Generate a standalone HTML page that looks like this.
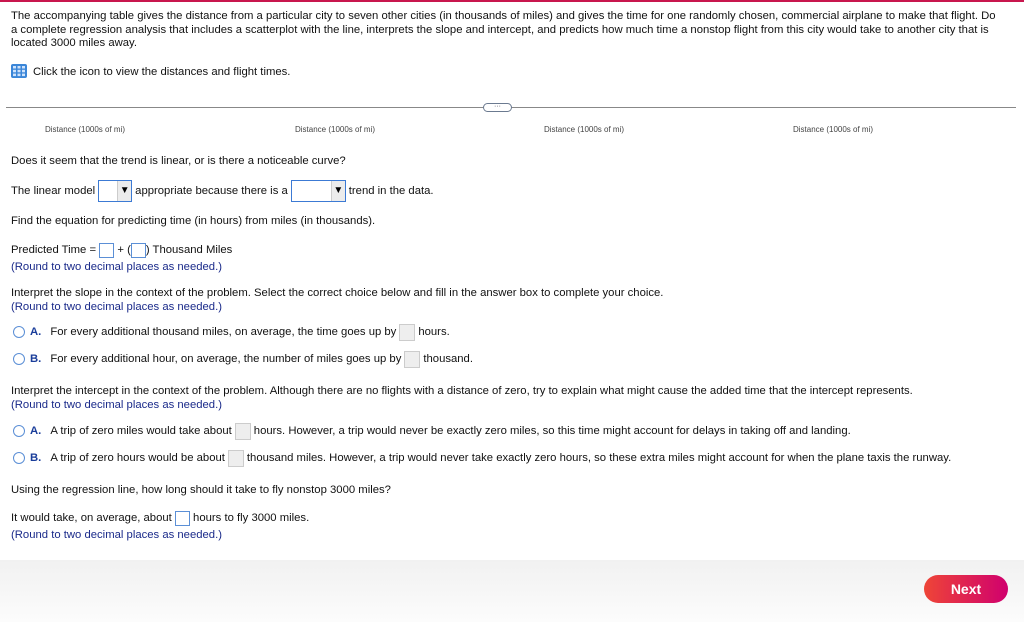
<!DOCTYPE html>
<html><head><style>
*{margin:0;padding:0;box-sizing:border-box}
body{width:1024px;height:622px;overflow:hidden;background:#fff;font-family:"Liberation Sans",Arial,sans-serif;font-size:11.3px;color:#111;position:relative}
.t{position:absolute;left:11px;white-space:nowrap;line-height:14px}
.blue{color:#1a2a8a}
.box{display:inline-block;width:15px;height:15px;border:1px solid #5b8fd6;vertical-align:middle;background:#fff;margin:-4px 0}
.gbox{display:inline-block;width:16px;height:17px;border:1px solid #ccc;background:#eee;vertical-align:middle;margin:-5px 3px}
.sel{display:inline-block;height:22px;border:1px solid #3c7ad4;vertical-align:middle;position:relative;background:#fff;margin:-8px 3px}
.sel i{position:absolute;right:0;top:0;width:14px;height:20px;background:#ececec;border-left:1px solid #ccc;font-style:normal;font-size:10px;text-align:center;line-height:20px;color:#000}
.rad{display:inline-block;width:12px;height:12px;border:1.5px solid #5b8fd6;border-radius:50%;vertical-align:middle;margin:-3px 5px -3px 0}
.lt{font-weight:bold;color:#1a3d9a;margin-right:9px}
.hd{position:absolute;top:125px;font-size:8px;color:#444}
</style></head><body>
<div style="position:absolute;left:0;top:0;width:1024px;height:2px;background:#c8174e"></div>
<div class="t" style="top:10px;line-height:13.6px;white-space:normal;width:1000px">The accompanying table gives the distance from a particular city to seven other cities (in thousands of miles) and gives the time for one randomly chosen, commercial airplane to make that flight. Do<br>a complete regression analysis that includes a scatterplot with the line, interprets the slope and intercept, and predicts how much time a nonstop flight from this city would take to another city that is<br>located 3000 miles away.</div>
<div class="t" style="top:64px"><svg width="16" height="14" style="vertical-align:-3px;margin-right:6px"><rect x="0" y="0" width="16" height="14" rx="2" fill="#3b86d8"/><g fill="#cfe3fb"><rect x="2" y="2" width="3" height="2.5"/><rect x="6.5" y="2" width="3" height="2.5"/><rect x="11" y="2" width="3" height="2.5"/><rect x="2" y="5.8" width="3" height="2.5"/><rect x="6.5" y="5.8" width="3" height="2.5"/><rect x="11" y="5.8" width="3" height="2.5"/><rect x="2" y="9.6" width="3" height="2.5"/><rect x="6.5" y="9.6" width="3" height="2.5"/><rect x="11" y="9.6" width="3" height="2.5"/></g></svg>Click the icon to view the distances and flight times.</div>
<div style="position:absolute;left:6px;top:107px;width:1010px;height:1px;background:#888"></div>
<div style="position:absolute;left:483px;top:103px;width:29px;height:9px;border:1px solid #6b7a90;border-radius:5px;background:#fff;font-size:7px;line-height:5px;text-align:center;color:#445">···</div>
<div class="hd" style="left:45px">Distance (1000s of mi)</div>
<div class="hd" style="left:295px">Distance (1000s of mi)</div>
<div class="hd" style="left:544px">Distance (1000s of mi)</div>
<div class="hd" style="left:793px">Distance (1000s of mi)</div>
<div class="t" style="top:154px">Does it seem that the trend is linear, or is there a noticeable curve?</div>
<div class="t" style="top:184px">The linear model<span class="sel" style="width:34px"><i>▼</i></span>appropriate because there is a<span class="sel" style="width:55px"><i>▼</i></span>trend in the data.</div>
<div class="t" style="top:214px">Find the equation for predicting time (in hours) from miles (in thousands).</div>
<div class="t" style="top:243px">Predicted Time = <span class="box"></span> + (<span class="box"></span>) Thousand Miles</div>
<div class="t blue" style="top:260px">(Round to two decimal places as needed.)</div>
<div class="t" style="top:286px">Interpret the slope in the context of the problem. Select the correct choice below and fill in the answer box to complete your choice.</div>
<div class="t blue" style="top:300px">(Round to two decimal places as needed.)</div>
<div class="t" style="top:325px;left:13px"><span class="rad"></span><span class="lt">A.</span>For every additional thousand miles, on average, the time goes up by<span class="gbox"></span>hours.</div>
<div class="t" style="top:352px;left:13px"><span class="rad"></span><span class="lt">B.</span>For every additional hour, on average, the number of miles goes up by<span class="gbox"></span>thousand.</div>
<div class="t" style="top:384px">Interpret the intercept in the context of the problem. Although there are no flights with a distance of zero, try to explain what might cause the added time that the intercept represents.</div>
<div class="t blue" style="top:398px">(Round to two decimal places as needed.)</div>
<div class="t" style="top:424px;left:13px"><span class="rad"></span><span class="lt">A.</span>A trip of zero miles would take about<span class="gbox"></span>hours. However, a trip would never be exactly zero miles, so this time might account for delays in taking off and landing.</div>
<div class="t" style="top:451px;left:13px"><span class="rad"></span><span class="lt">B.</span>A trip of zero hours would be about<span class="gbox"></span>thousand miles. However, a trip would never take exactly zero hours, so these extra miles might account for when the plane taxis the runway.</div>
<div class="t" style="top:483px">Using the regression line, how long should it take to fly nonstop 3000 miles?</div>
<div class="t" style="top:511px">It would take, on average, about <span class="box"></span> hours to fly 3000 miles.</div>
<div class="t blue" style="top:528px">(Round to two decimal places as needed.)</div>
<div style="position:absolute;left:0;top:560px;width:1024px;height:62px;background:linear-gradient(#f1f1f1,#fcfcfc)"></div>
<div style="position:absolute;left:924px;top:575px;width:84px;height:28px;border-radius:14px;background:linear-gradient(90deg,#ee4537,#d0006e);color:#fff;font-weight:bold;font-size:14px;text-align:center;line-height:28px">Next</div>
</body></html>
